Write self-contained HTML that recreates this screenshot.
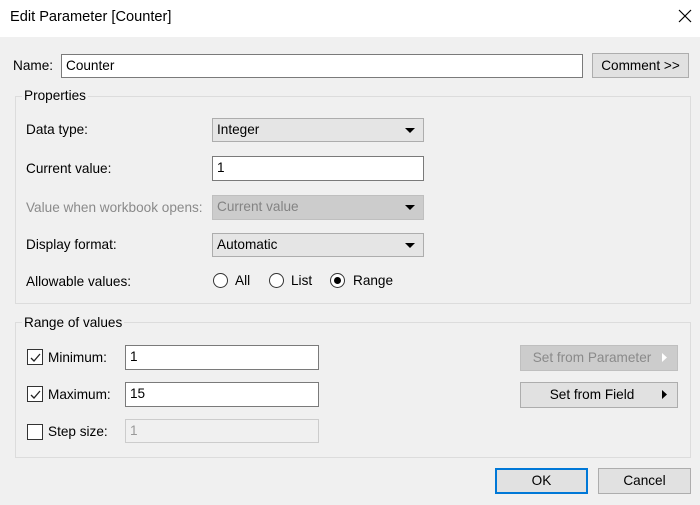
<!DOCTYPE html>
<html><head><style>
*{box-sizing:border-box;margin:0;padding:0}
body{width:700px;height:505px;background:#f0f0f0;font-family:"Liberation Sans",sans-serif;font-size:13.6px;color:#000;position:relative;overflow:hidden}
.a{position:absolute}
.t{position:absolute;line-height:16px;white-space:nowrap}
.inp{position:absolute;background:#fff;border:1px solid #7a7a7a;padding-left:4px;line-height:22px}
.sel{position:absolute;background:#e5e5e5;border:1px solid #adadad;padding-left:4px;line-height:22px}
.sel::after{content:"";position:absolute;right:8px;top:9px;border-left:5px solid transparent;border-right:5px solid transparent;border-top:5px solid #000}
.grp{position:absolute;border:1px solid #dcdcdc}
.btn{position:absolute;background:#e1e1e1;border:1px solid #adadad;text-align:center;line-height:23px}
.rad{position:absolute;width:15px;height:15px;border:1px solid #333;border-radius:50%;background:#fff}
.chk{position:absolute;width:16px;height:16px;border:1px solid #333;background:#fff}
</style></head><body>
<div class="a" style="left:0;top:0;width:700px;height:37px;background:#fff"></div>
<div class="t" style="left:10px;top:9px;font-size:14.6px">Edit Parameter [Counter]</div>
<svg class="a" style="left:678px;top:9px" width="14" height="14"><path d="M1 1L13 13M13 1L1 13" stroke="#000" stroke-width="1.2"/></svg>

<div class="t" style="left:13px;top:58px">Name:</div>
<div class="inp" style="left:61px;top:54px;width:522px;height:24px">Counter</div>
<div class="btn" style="left:592px;top:53px;width:97px;height:25px">Comment &gt;&gt;</div>

<div class="grp" style="left:15px;top:96px;width:676px;height:208px"></div>
<div class="t" style="left:22px;top:88px;background:#f0f0f0;padding:0 2px">Properties</div>

<div class="t" style="left:26px;top:122px">Data type:</div>
<div class="sel" style="left:212px;top:118px;width:212px;height:24px">Integer</div>
<div class="t" style="left:26px;top:161px">Current value:</div>
<div class="inp" style="left:212px;top:156px;width:212px;height:25px">1</div>
<div class="t" style="left:26px;top:200px;color:#8a8a8a">Value when workbook opens:</div>
<div class="sel" style="left:212px;top:195px;width:212px;height:25px;background:#cccccc;border-color:#bfbfbf;color:#838383">Current value</div>
<div class="t" style="left:26px;top:237px">Display format:</div>
<div class="sel" style="left:212px;top:233px;width:212px;height:24px">Automatic</div>
<div class="t" style="left:26px;top:274px">Allowable values:</div>
<div class="rad" style="left:213px;top:273px"></div><div class="t" style="left:235px;top:273px">All</div>
<div class="rad" style="left:269px;top:273px"></div><div class="t" style="left:291px;top:273px">List</div>
<div class="rad" style="left:330px;top:273px"><div class="a" style="left:3px;top:3px;width:7px;height:7px;border-radius:50%;background:#000"></div></div><div class="t" style="left:353px;top:273px">Range</div>

<div class="grp" style="left:15px;top:322px;width:676px;height:136px"></div>
<div class="t" style="left:22px;top:315px;background:#f0f0f0;padding:0 2px">Range of values</div>

<div class="chk" style="left:27px;top:349px"><svg class="a" style="left:1px;top:1px" width="13" height="13"><path d="M2 7L5 10L11 3" stroke="#222" stroke-width="1.3" fill="none"/></svg></div>
<div class="t" style="left:48px;top:350px">Minimum:</div>
<div class="inp" style="left:125px;top:345px;width:194px;height:25px">1</div>
<div class="chk" style="left:27px;top:386px"><svg class="a" style="left:1px;top:1px" width="13" height="13"><path d="M2 7L5 10L11 3" stroke="#222" stroke-width="1.3" fill="none"/></svg></div>
<div class="t" style="left:48px;top:387px">Maximum:</div>
<div class="inp" style="left:125px;top:382px;width:194px;height:25px">15</div>
<div class="chk" style="left:27px;top:424px"></div>
<div class="t" style="left:48px;top:424px">Step size:</div>
<div class="inp" style="left:125px;top:419px;width:194px;height:24px;background:#f0f0f0;border-color:#ccc;color:#999">1</div>

<div class="btn" style="left:520px;top:345px;width:158px;height:26px;background:#cccccc;border-color:#bfbfbf;color:#8a8a8a;padding-right:14px">Set from Parameter</div>
<svg class="a" style="left:662px;top:353px" width="6" height="9"><path d="M0 0L5 4.5L0 9Z" fill="#fff"/></svg>
<div class="btn" style="left:520px;top:382px;width:158px;height:26px;padding-right:14px">Set from Field</div>
<svg class="a" style="left:662px;top:390px" width="6" height="9"><path d="M0 0L5 4.5L0 9Z" fill="#000"/></svg>

<div class="btn" style="left:495px;top:468px;width:93px;height:26px;border:2px solid #0078d7;line-height:22px">OK</div>
<div class="btn" style="left:598px;top:468px;width:93px;height:26px">Cancel</div>
</body></html>
